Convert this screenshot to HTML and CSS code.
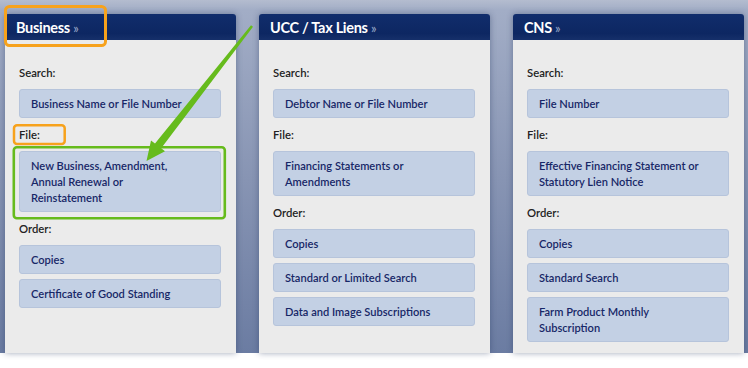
FILE: index.html
```html
<!DOCTYPE html>
<html lang="en">
<head>
  <meta charset="UTF-8" />
  <meta name="viewport" content="width=device-width, initial-scale=1.0"/>
  <title>Online Services</title>
  <link rel="stylesheet" href="styles.css">
</head>
<body>
  <div class="services">
    <div class="panel">
      <div class="panel-head">Business <span class="raquo">&raquo;</span></div>
      <div class="panel-body">
        <p class="group">Search:</p>
        <a href="#" class="service">Business Name or File Number</a>
        <p class="group">File:</p>
        <a href="#" class="service">New Business, Amendment,<br>Annual Renewal or<br>Reinstatement</a>
        <p class="group">Order:</p>
        <a href="#" class="service">Copies</a>
        <a href="#" class="service">Certificate of Good Standing</a>
      </div>
    </div>

    <div class="panel">
      <div class="panel-head">UCC / Tax Liens <span class="raquo">&raquo;</span></div>
      <div class="panel-body">
        <p class="group">Search:</p>
        <a href="#" class="service">Debtor Name or File Number</a>
        <p class="group">File:</p>
        <a href="#" class="service">Financing Statements or<br>Amendments</a>
        <p class="group">Order:</p>
        <a href="#" class="service">Copies</a>
        <a href="#" class="service">Standard or Limited Search</a>
        <a href="#" class="service">Data and Image Subscriptions</a>
      </div>
    </div>

    <div class="panel">
      <div class="panel-head">CNS <span class="raquo">&raquo;</span></div>
      <div class="panel-body">
        <p class="group">Search:</p>
        <a href="#" class="service">File Number</a>
        <p class="group">File:</p>
        <a href="#" class="service">Effective Financing Statement or<br>Statutory Lien Notice</a>
        <p class="group">Order:</p>
        <a href="#" class="service">Copies</a>
        <a href="#" class="service">Standard Search</a>
        <a href="#" class="service">Farm Product Monthly<br>Subscription</a>
      </div>
    </div>
  </div>

  <!-- annotation marks drawn over the screenshot -->
  <svg class="marks" width="748" height="368" viewBox="0 0 748 368">
    <rect x="5.5" y="6.5" width="100" height="39" rx="4" fill="none" stroke="#f7a21c" stroke-width="3"/>
    <rect x="14" y="125.3" width="50.7" height="18.7" rx="3" fill="none" stroke="#f7a21c" stroke-width="2.5"/>
    <rect x="13.8" y="147.2" width="211" height="71" rx="3" fill="none" stroke="#66bb1c" stroke-width="2.6"/>
    <path d="M251 25.2 L253 26.8 L161.2 148.3 L165 151.2 L146.5 161 L151 140.5 L155 143.5 Z" fill="#66bb1c"/>
  </svg>
</body>
</html>
```

FILE: styles.css
```css
* {
  margin: 0; padding: 0;
  box-sizing: border-box;
  font-family: 'Lato', 'Open Sans', sans-serif;
}
body {
  background-color: #fff;
  position: relative;
  width: 748px;
  height: 368px;
  overflow: hidden;
}

.services {
  display: flex;
  gap: 23px;
  height: 353px;
  padding: 14px 4px 0 5px;
  background: linear-gradient(to bottom, #b4bccf 0px, #a2adc6 10px, #8794b3 180px, #6b7ca2 353px);
}

.panel {
  width: 231px;
  display: flex;
  flex-direction: column;
  border-radius: 3px 3px 0 0;
  box-shadow: 0 0 6px rgba(40, 55, 95, 0.45);
}

.panel-head {
  height: 26px;
  padding: 4px 11px 0;
  background: linear-gradient(to bottom, #112d6c, #0d2762 75%, #16306a);
  border-radius: 3px 3px 0 0;
  color: #fff;
  font-size: 14.5px;
  font-weight: bold;
  line-height: 19px;
  letter-spacing: -0.3px;
}
.raquo {
  color: #9aa9c9;
  font-size: 13px;
  font-weight: normal;
}

.panel-body {
  flex: 1;
  background-color: #ebebeb;
  padding: 25px 15px 0 14px;
  display: flex;
  flex-direction: column;
  gap: 5px;
}

.group {
  font-size: 11.3px;
  line-height: 16px;
  color: #222;
  font-weight: 600;
  margin: 4px 0 3px 0;
}
.group:first-child {
  margin-top: 0;
}

.service {
  display: block;
  background-color: #c3d0e4;
  border: 1px solid #b6c4db;
  border-radius: 3px;
  padding: 6px 11px 5px;
  font-size: 11.1px;
  line-height: 16px;
  font-weight: 600;
  color: #172767;
  text-decoration: none;
}

.marks {
  position: absolute;
  left: 0;
  top: 0;
  pointer-events: none;
}
```
